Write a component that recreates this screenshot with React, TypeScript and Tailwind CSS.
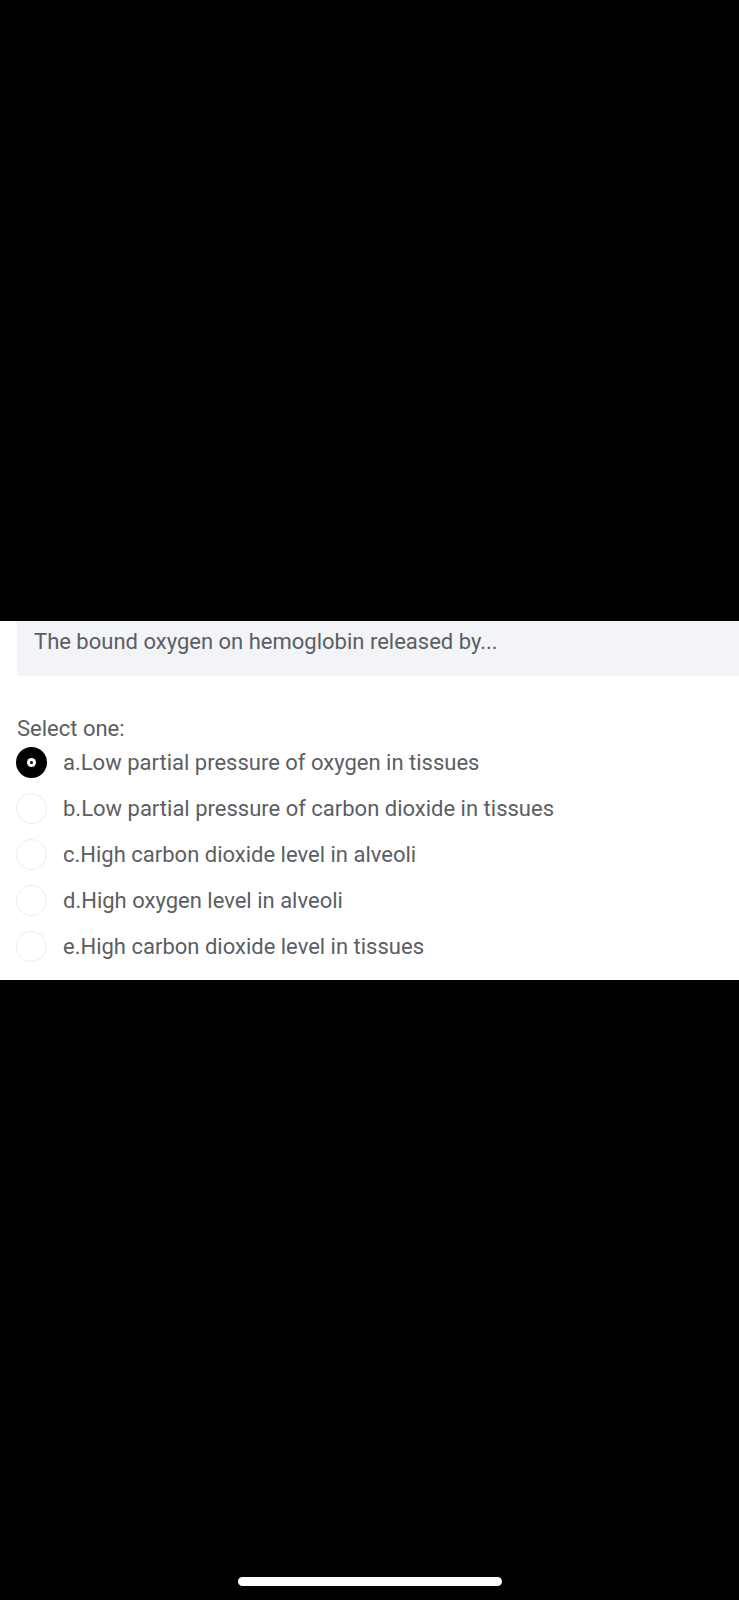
import { useState } from 'react'

const options = [
  'a.Low partial pressure of oxygen in tissues',
  'b.Low partial pressure of carbon dioxide in tissues',
  'c.High carbon dioxide level in alveoli',
  'd.High oxygen level in alveoli',
  'e.High carbon dioxide level in tissues',
]

function Radio({ checked }: { checked: boolean }) {
  if (checked) {
    return (
      <span className="flex h-[31px] w-[31px] shrink-0 items-center justify-center rounded-full bg-black">
        <span className="flex h-[9px] w-[9px] items-center justify-center rounded-full bg-white">
          <span className="h-[3px] w-[3px] rounded-full bg-black" />
        </span>
      </span>
    )
  }
  return <span className="h-[31px] w-[31px] shrink-0 rounded-full border border-[#ececec] bg-white" />
}

export default function App() {
  const [selected, setSelected] = useState(0)

  return (
    <div className="flex h-[1600px] w-full flex-col bg-black font-['Roboto',sans-serif]">
      <div className="h-[621px]" />

      {/* Question card */}
      <div className="flex h-[359px] flex-col bg-white">
        <div className="ml-[17px] h-[55px] rounded-bl-[4px] bg-[#f2f4f7] px-[17px] pt-[8px]">
          <p className="text-[22px] leading-[26px] text-[#5b5e62]">The bound oxygen on hemoglobin released by...</p>
        </div>

        <p className="ml-[17px] mt-[42px] text-[22px] leading-[21px] text-[#5b5e62]">Select one:</p>

        <div className="flex flex-col">
          {options.map((opt, i) => (
            <label
              key={opt}
              onClick={() => setSelected(i)}
              className="flex h-[46px] cursor-pointer items-center pl-[16px]"
            >
              <Radio checked={selected === i} />
              <span className="ml-[16px] text-[22px] text-[#5b5e62]">{opt}</span>
            </label>
          ))}
        </div>
      </div>

      {/* Home indicator */}
      <div className="flex flex-1 items-end justify-center pb-[14px]">
        <div className="h-[9px] w-[264px] rounded-full bg-white" />
      </div>
    </div>
  )
}
